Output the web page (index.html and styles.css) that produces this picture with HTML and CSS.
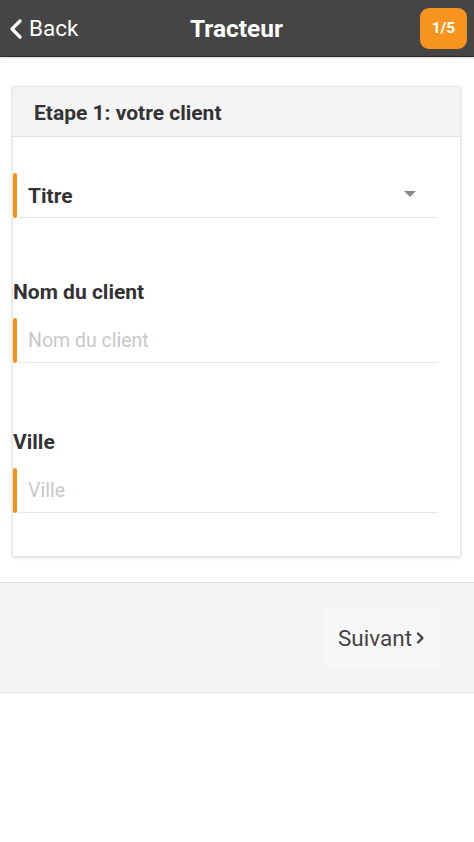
FILE: index.html
```html
<!DOCTYPE html>
<html lang="fr">
<head>
<meta charset="utf-8">
<title>Tracteur</title>
<link rel="stylesheet" href="styles.css">
</head>
<body>
<header class="topbar">
  <div class="side side-left">
    <div class="back">
      <svg class="back-icon" width="14" height="20" viewBox="0 0 14 20"><polyline points="11,2 3,10 11,18" fill="none" stroke="#fff" stroke-width="3.2" stroke-linecap="round" stroke-linejoin="round"/></svg>
      <span>Back</span>
    </div>
  </div>
  <h1 class="title">Tracteur</h1>
  <div class="side side-right">
    <div class="badge">1/5</div>
  </div>
</header>

<main class="content">
  <section class="card">
    <div class="card-head">Etape 1: votre client</div>
    <div class="card-body">
      <div class="field field-select">
        <span class="bar"></span>
        <div class="control">
          <span class="value">Titre</span>
          <span class="caret"></span>
        </div>
      </div>

      <label class="label label-first">Nom du client</label>
      <div class="field">
        <span class="bar"></span>
        <div class="control"><span class="placeholder">Nom du client</span></div>
      </div>

      <label class="label label-second">Ville</label>
      <div class="field">
        <span class="bar"></span>
        <div class="control"><span class="placeholder">Ville</span></div>
      </div>
    </div>
  </section>
</main>

<footer class="actions">
  <div class="next">
    <span>Suivant</span>
    <svg width="9" height="14" viewBox="0 0 9 14"><polyline points="2,2.5 6.5,7 2,11.5" fill="none" stroke="#444" stroke-width="2.4" stroke-linecap="round" stroke-linejoin="round"/></svg>
  </div>
</footer>
</body>
</html>
```

FILE: styles.css
```css
* { box-sizing: border-box; }

body {
  margin: 0;
  background: #ffffff;
  font-family: Roboto, "Liberation Sans", Arial, sans-serif;
  color: #333333;
}

.topbar {
  height: 57px;
  background: #454545;
  border-bottom: 1px solid #2c2c2c;
  box-shadow: 0 1px 2px rgba(0,0,0,0.18);
  display: flex;
  align-items: center;
  padding: 0 7px 0 9px;
}

.side {
  width: 120px;
  display: flex;
}

.side-right { justify-content: flex-end; }

.back {
  display: flex;
  align-items: center;
  gap: 6px;
  color: #ffffff;
  font-size: 22.5px;
}

.back-icon { margin-top: 1px; }

.title {
  margin: 0;
  color: #ffffff;
  font-size: 24.5px;
  font-weight: 700;
  flex: 1;
  text-align: center;
  padding-right: 3px;
}

.badge {
  display: flex;
  align-items: center;
  justify-content: center;
  width: 47px;
  height: 41px;
  border-radius: 9px;
  background: #f7941d;
  color: #ffffff;
  font-size: 15.5px;
  font-weight: 700;
}

.content {
  padding: 29px 13px 25px 12px;
}

.card {
  background: #ffffff;
  border: 1px solid #e6e6e6;
  border-radius: 2px;
  box-shadow: 0 1px 3px rgba(0,0,0,0.16);
}

.card-head {
  height: 50px;
  background: #f4f4f4;
  border-bottom: 1px solid #e2e2e2;
  display: flex;
  align-items: center;
  padding-left: 21px;
  font-size: 21px;
  font-weight: 700;
  color: #333333;
  padding-top: 2px;
}

.card-body {
  padding: 36px 22px 43px 0;
}

.field {
  display: flex;
  height: 45px;
}

.bar {
  width: 4px;
  background: #f39419;
  border-radius: 2px;
  flex: none;
}

.control {
  flex: 1;
  border-bottom: 1px solid #e7e7e7;
  margin-left: 1px;
  display: flex;
  align-items: center;
  justify-content: space-between;
  padding-left: 10px;
}

.value {
  font-size: 21px;
  font-weight: 700;
  color: #333333;
  padding-top: 1px;
}

.caret {
  width: 0;
  height: 0;
  border-left: 6px solid transparent;
  border-right: 6px solid transparent;
  border-top: 6px solid #8a8a8a;
  margin-right: 22px;
  margin-bottom: 3px;
}

.placeholder {
  font-size: 19.5px;
  color: #c8c8c8;
  padding-top: 0;
}

.label {
  display: block;
  font-size: 21px;
  font-weight: 700;
  line-height: 24px;
  color: #333333;
  margin-bottom: 14px;
}

.label-first { margin-top: 62px; }
.label-second { margin-top: 67px; }

.actions {
  background: #f4f4f4;
  border-top: 1px solid #e0e0e0;
  border-bottom: 1px solid #e0e0e0;
  height: 111px;
  display: flex;
  justify-content: flex-end;
  align-items: flex-start;
  padding: 24px 34px 0 0;
}

.next {
  width: 118px;
  height: 61px;
  background: #f7f7f7;
  display: flex;
  align-items: center;
  justify-content: center;
  gap: 4px;
  font-size: 22.5px;
  color: #444444;
  padding-left: 1px;
}
```
